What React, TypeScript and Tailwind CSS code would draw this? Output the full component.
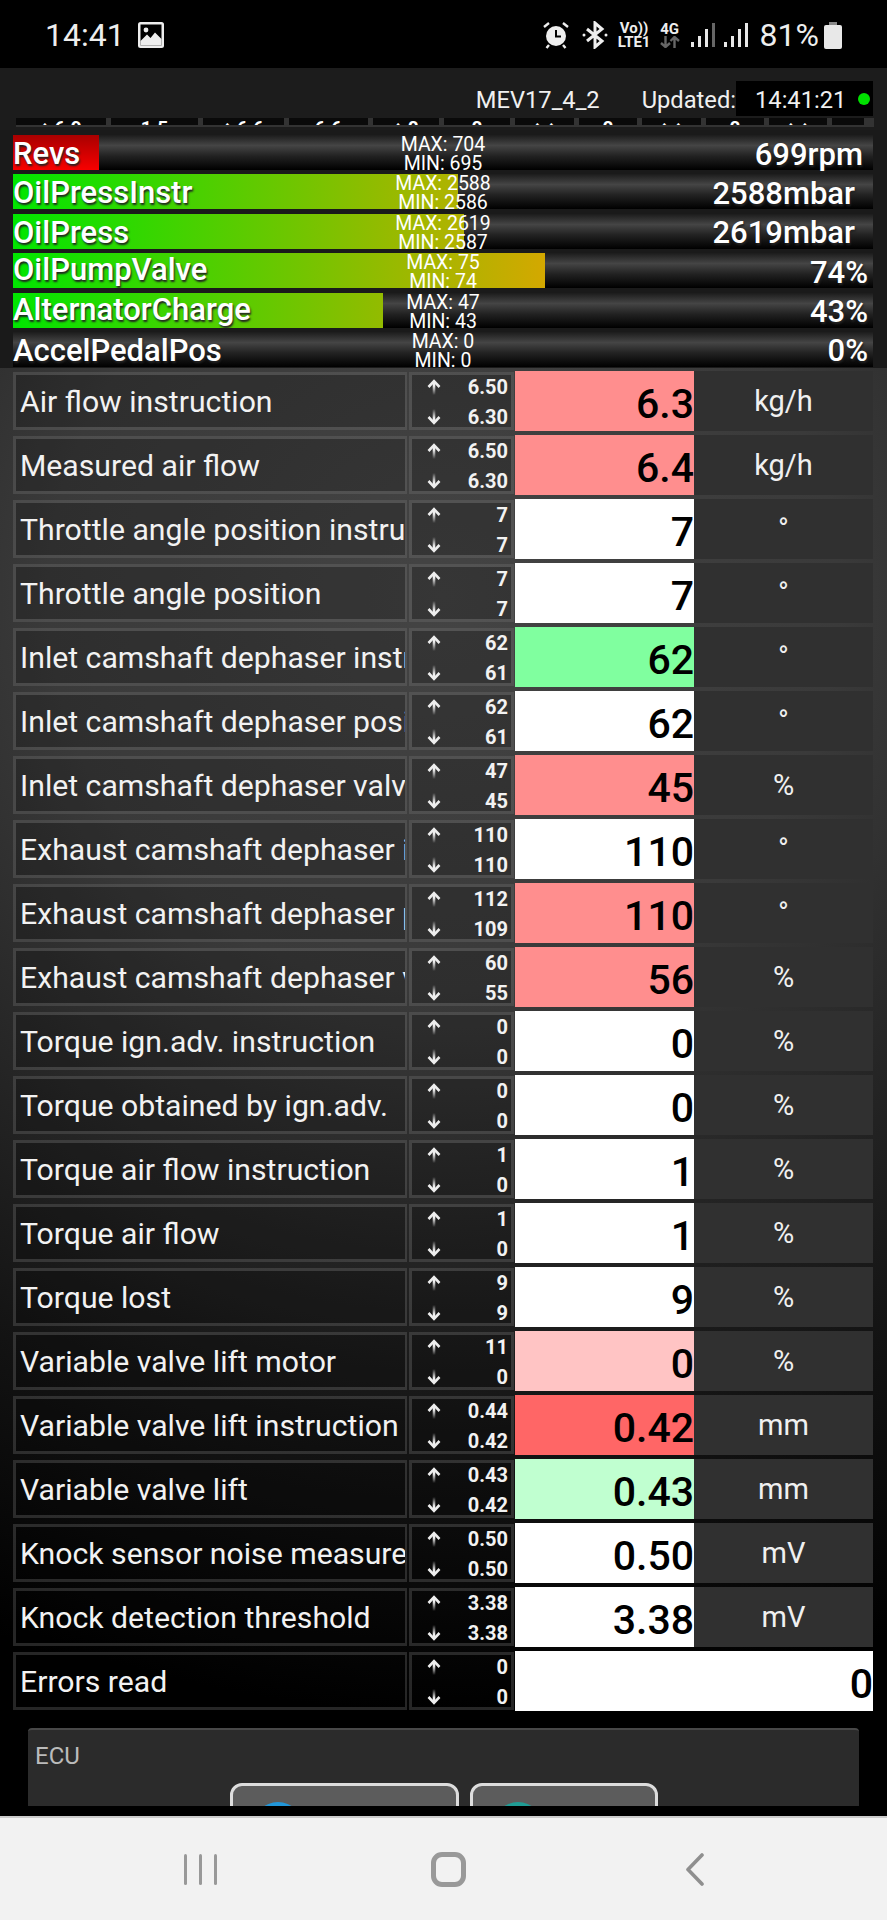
import React from "react";

type Row = { name: string; max: string; min: string; value: string; unit?: string; bg: string };

const rows: Row[] = [
  { name: "Air flow instruction", max: "6.50", min: "6.30", value: "6.3", unit: "kg/h", bg: "bg-[#ff8e8e]" },
  { name: "Measured air flow", max: "6.50", min: "6.30", value: "6.4", unit: "kg/h", bg: "bg-[#ff8e8e]" },
  { name: "Throttle angle position instruction", max: "7", min: "7", value: "7", unit: "°", bg: "bg-white" },
  { name: "Throttle angle position", max: "7", min: "7", value: "7", unit: "°", bg: "bg-white" },
  { name: "Inlet camshaft dephaser instruction", max: "62", min: "61", value: "62", unit: "°", bg: "bg-[#80ff9f]" },
  { name: "Inlet camshaft dephaser position", max: "62", min: "61", value: "62", unit: "°", bg: "bg-white" },
  { name: "Inlet camshaft dephaser valve", max: "47", min: "45", value: "45", unit: "%", bg: "bg-[#ff8e8e]" },
  { name: "Exhaust camshaft dephaser instruction", max: "110", min: "110", value: "110", unit: "°", bg: "bg-white" },
  { name: "Exhaust camshaft dephaser position", max: "112", min: "109", value: "110", unit: "°", bg: "bg-[#ff8e8e]" },
  { name: "Exhaust camshaft dephaser valve", max: "60", min: "55", value: "56", unit: "%", bg: "bg-[#ff8e8e]" },
  { name: "Torque ign.adv. instruction", max: "0", min: "0", value: "0", unit: "%", bg: "bg-white" },
  { name: "Torque obtained by ign.adv.", max: "0", min: "0", value: "0", unit: "%", bg: "bg-white" },
  { name: "Torque air flow instruction", max: "1", min: "0", value: "1", unit: "%", bg: "bg-white" },
  { name: "Torque air flow", max: "1", min: "0", value: "1", unit: "%", bg: "bg-white" },
  { name: "Torque lost", max: "9", min: "9", value: "9", unit: "%", bg: "bg-white" },
  { name: "Variable valve lift motor", max: "11", min: "0", value: "0", unit: "%", bg: "bg-[#ffc4c4]" },
  { name: "Variable valve lift instruction", max: "0.44", min: "0.42", value: "0.42", unit: "mm", bg: "bg-[#ff6666]" },
  { name: "Variable valve lift", max: "0.43", min: "0.42", value: "0.43", unit: "mm", bg: "bg-[#c0ffd0]" },
  { name: "Knock sensor noise measurement", max: "0.50", min: "0.50", value: "0.50", unit: "mV", bg: "bg-white" },
  { name: "Knock detection threshold", max: "3.38", min: "3.38", value: "3.38", unit: "mV", bg: "bg-white" },
  { name: "Errors read", max: "0", min: "0", value: "0", bg: "bg-white" },
];

type Bar = { label: string; max: string; min: string; value: string; fill: number; kind: "red" | "green" | "none"; pr: string; lift: string };

const bars: Bar[] = [
  { label: "Revs", max: "704", min: "695", value: "699rpm", fill: 86, kind: "red", pr: "pr-[10px]", lift: "pb-[1px]" },
  { label: "OilPressInstr", max: "2588", min: "2586", value: "2588mbar", fill: 445, kind: "green", pr: "pr-[18px]", lift: "pb-[2px]" },
  { label: "OilPress", max: "2619", min: "2587", value: "2619mbar", fill: 451, kind: "green", pr: "pr-[18px]", lift: "pb-[1px]" },
  { label: "OilPumpValve", max: "75", min: "74", value: "74%", fill: 532, kind: "green", pr: "pr-[5px]", lift: "pb-[5px]" },
  { label: "AlternatorCharge", max: "47", min: "43", value: "43%", fill: 370, kind: "green", pr: "pr-[5px]", lift: "pb-[4px]" },
  { label: "AccelPedalPos", max: "0", min: "0", value: "0%", fill: 0, kind: "none", pr: "pr-[5px]", lift: "pb-[1px]" },
];

const strip = [
  ["↑ 6.9", "w-[90px]"],
  ["1.5", "w-[87px]"],
  ["↑ 6.6", "w-[81px]"],
  ["6.6", "w-[79px]"],
  ["↑ 0", "w-[66px]"],
  ["0", "w-[66px]"],
  ["↑ ↑", "w-[59px]"],
  ["0", "w-[58px]"],
  ["↑ ↑", "w-[59px]"],
  ["0", "w-[58px]"],
  ["↑ ↑", "w-[58px]"],
  ["", "w-[32px]"],
];

function Arrow({ down }: { down?: boolean }) {
  return (
    <svg width="16" height="18" viewBox="0 0 16 18" className={down ? "rotate-180" : ""} fill="none" strokeWidth="2.6">
      <defs>
        <linearGradient id="arrowTail" gradientUnits="userSpaceOnUse" x1="8" y1="8" x2="8" y2="17">
          <stop offset="0" stopColor="#eeeeee" />
          <stop offset="1" stopColor="#eeeeee" stopOpacity="0" />
        </linearGradient>
      </defs>
      <path d="M8 4V17" stroke="url(#arrowTail)" />
      <path d="M2.5 9L8 3.2L13.5 9" stroke="#eeeeee" />
    </svg>
  );
}

function Signal({ dim }: { dim?: boolean }) {
  return (
    <svg width="24" height="24" viewBox="0 0 24 24" fill="#e8e8e8">
      <rect x="0" y="19" width="3" height="5" />
      <rect x="7" y="13" width="3" height="11" />
      <rect x="14" y="6" width="3" height="18" />
      <rect x="21" y="0" width="3" height="24" fill={dim ? "#666666" : "#e8e8e8"} />
    </svg>
  );
}

function StatusBar() {
  return (
    <div className="h-[68px] shrink-0 bg-black flex items-center pl-[45px] pr-[45px] pt-[2px] text-[#eeeeee]">
      <span className="text-[32px] leading-none w-[93px]">14:41</span>
      <svg width="26" height="26" viewBox="0 0 26 26">
        <rect width="26" height="26" rx="2.5" fill="#eeeeee" />
        <rect x="2.5" y="2.5" width="21" height="21" fill="#000" />
        <circle cx="8" cy="8" r="2.4" fill="#eeeeee" />
        <path d="M2.5 23.5V19L9 12.5L12.5 16L17 10.5L23.5 17V23.5Z" fill="#eeeeee" />
      </svg>
      <div className="flex-1" />
      <svg width="28" height="28" viewBox="0 0 28 28" fill="none" stroke="#eeeeee">
        <circle cx="14" cy="15" r="10" fill="#eeeeee" stroke="none" />
        <path d="M14 9V15.5H19" stroke="#000" strokeWidth="2" />
        <path d="M2 6L7 2M26 6L21 2M7 24L4.5 27M21 24L23.5 27" strokeWidth="2.4" />
      </svg>
      <svg className="ml-[12px]" width="26" height="28" viewBox="0 0 26 28" fill="none" stroke="#eeeeee" strokeWidth="3">
        <path d="M5 8L20 20L13 26V2L20 8L5 20" />
        <circle cx="2" cy="14" r="1.5" fill="#eeeeee" stroke="none" />
        <circle cx="24" cy="14" r="1.5" fill="#eeeeee" stroke="none" />
      </svg>
      <div className="ml-[10px] w-[33px] flex flex-col items-center text-[15px] font-bold leading-[14px]">
        <span>Vo))</span>
        <span>LTE1</span>
      </div>
      <div className="ml-[9px] w-[20px] flex flex-col items-center text-[15px] font-bold leading-[13px]">
        <span>4G</span>
        <svg width="20" height="12" viewBox="0 0 20 12" fill="none" stroke="#666666" strokeWidth="2.4">
          <path d="M5.5 0V11M1 7L5.5 11L10 7" />
          <path d="M14.5 12V1M10.5 5L14.5 1L19 5" />
        </svg>
      </div>
      <div className="ml-[11px]">
        <Signal dim />
      </div>
      <div className="ml-[9px]">
        <Signal />
      </div>
      <span className="ml-[12px] text-[32px] leading-none">81%</span>
      <svg className="ml-[5px]" width="18" height="27" viewBox="0 0 18 27">
        <rect x="5" y="0" width="8" height="4" fill="#888888" />
        <rect x="0" y="3" width="18" height="24" rx="2" fill="#e8e8e8" />
      </svg>
    </div>
  );
}

function Header() {
  return (
    <div className="h-[50px] shrink-0 bg-[#1c1c1c] flex items-start justify-end pr-[14px] pt-[13px] text-[23.7px] leading-[38px] text-[#f0f0f0] relative z-10">
      <span>MEV17_4_2</span>
      <span className="ml-[42px]">Updated:</span>
      <div className="w-[137px] h-[35px] bg-black flex items-start pl-[19px] justify-between pr-[3px]">
        <span>14:41:21</span>
        <span className="w-[12px] h-[12px] mt-[12px] rounded-full bg-[#00e000]" />
      </div>
    </div>
  );
}

function Strip() {
  return (
    <div className="h-[12px] shrink-0 bg-[#1c1c1c] pl-[16px] overflow-hidden">
      <div className="flex h-[9px] w-[858px] gap-[5px] bg-[#333333]">
        {strip.map(([t, w], i) => (
          <div key={i} className={`${w} h-[7px] bg-[#0a0a0a] overflow-hidden flex items-end justify-center`}>
            <span className="text-[19px] font-bold leading-[19px] text-white translate-y-[12px] whitespace-nowrap">{t}</span>
          </div>
        ))}
      </div>
    </div>
  );
}

function BarRow({ b }: { b: Bar }) {
  return (
    <div className="relative h-[35px] bg-[linear-gradient(180deg,#1c1c1c_0%,#454545_30%,#222222_60%,#000000_100%)]">
      {b.kind === "red" && (
        <div className="absolute left-0 top-0 h-full bg-[linear-gradient(180deg,#a80000,#f80000)]" style={{ width: b.fill }} />
      )}
      {b.kind === "green" && (
        <div
          className="absolute left-0 top-0 h-full bg-[linear-gradient(90deg,#00e600,#d4a800_62%,#ff0000)] bg-size-[860px_100%] bg-no-repeat"
          style={{ width: b.fill }}
        />
      )}
      <div className="relative h-full grid grid-cols-[1fr_auto_1fr] items-center text-white [text-shadow:1px_2px_2px_#222222]">
        <span className={`text-[31px] font-medium leading-[31px] whitespace-nowrap ${b.lift}`}>{b.label}</span>
        <div className="flex flex-col items-center text-[19.5px] leading-[19px] [text-shadow:none]">
          <span>MAX: {b.max}</span>
          <span>MIN: {b.min}</span>
        </div>
        <span className={`text-[31px] font-medium leading-[31px] text-right ${b.pr}`}>{b.value}</span>
      </div>
    </div>
  );
}

function TableRow({ r }: { r: Row }) {
  return (
    <div className="flex h-[60px]">
      <div className="w-[394px] h-[58px] my-[1px] border-[3px] border-r-[2px] border-white/15 bg-black/20 flex items-center pl-[4px] pt-[2px] overflow-hidden">
        <span className="text-[30.2px] leading-none whitespace-nowrap text-[#f2f2f2]">{r.name}</span>
      </div>
      <div className="ml-[2px] w-[105px] h-[58px] my-[1px] border-[3px] border-white/15 bg-black/20 flex flex-col justify-center pt-[2px]">
        <div className="flex items-center justify-between pl-[14px] pr-[3px] h-[30px] shrink-0">
          <Arrow />
          <span className="text-[20px] font-bold leading-none text-[#f2f2f2]">{r.max}</span>
        </div>
        <div className="flex items-center justify-between pl-[14px] pr-[3px] h-[30px] shrink-0">
          <Arrow down />
          <span className="text-[20px] font-bold leading-none text-[#f2f2f2]">{r.min}</span>
        </div>
      </div>
      <div className={`${r.bg} ml-[1px] ${r.unit ? "w-[179px]" : "w-[358px]"} h-[60px] flex items-center justify-end pt-[6px]`}>
        <span className="text-[41px] font-medium leading-none text-black">{r.value}</span>
      </div>
      {r.unit && (
        <div className="w-[179px] bg-[#303030] flex items-center justify-center">
          <span className="text-[29px] leading-none text-[#f0f0f0]">{r.unit}</span>
        </div>
      )}
    </div>
  );
}

function EcuPanel() {
  return (
    <div className="flex-1 min-h-0 mb-[10px] px-[28px] pt-[19px] overflow-hidden">
      <div className="relative h-[120px] rounded-t-[4px] border-t-2 border-[#484848] bg-[#2b2b2b] pt-[12px] pl-[7px]">
        <div className="text-[24px] leading-[28px] text-[#bbbbbb]">ECU</div>
        <div className="flex gap-[11px] ml-[195px] mt-[13px]">
          <div className="w-[229px] h-[80px] rounded-[12px] border-[3px] border-[#dddddd] bg-[#5c5c5c] pl-[20px] pt-[16px]">
            <div className="w-[50px] h-[50px] rounded-full bg-[#2196d8]" />
          </div>
          <div className="w-[188px] h-[80px] rounded-[12px] border-[3px] border-[#dddddd] bg-[#5c5c5c] pl-[20px] pt-[16px]">
            <div className="w-[50px] h-[50px] rounded-full bg-[#1f9c94]" />
          </div>
        </div>
      </div>
    </div>
  );
}

function NavBar() {
  return (
    <div className="h-[104px] shrink-0 bg-[#f2f2f2] border-t-2 border-[#cccccc] relative flex items-center">
      <div className="flex gap-[12px] ml-[184px] h-[31px]">
        <span className="w-[3px] h-full bg-[#999999] rounded-full" />
        <span className="w-[3px] h-full bg-[#999999] rounded-full" />
        <span className="w-[3px] h-full bg-[#999999] rounded-full" />
      </div>
      <div className="ml-[214px] w-[35px] h-[35px] rounded-[11px] border-[5px] border-[#999999]" />
      <svg className="ml-[219px]" width="20" height="33" viewBox="0 0 20 33" fill="none" stroke="#8f8f8f" strokeWidth="3.6" strokeLinecap="round" strokeLinejoin="round">
        <path d="M17 2L3 16.5L17 31" />
      </svg>
    </div>
  );
}

export default function App() {
  return (
    <div className="w-[887px] h-[1920px] overflow-hidden flex flex-col bg-black font-['Roboto',sans-serif]">
      <StatusBar />
      <Header />
      <Strip />
      <div className="h-[238px] shrink-0 bg-[#1a1a1a] px-[13px] pr-[14px] pt-[5px] flex flex-col gap-[4.4px]">
        {bars.map((b) => (
          <BarRow key={b.label} b={b} />
        ))}
      </div>
      <div className="flex-1 min-h-0 flex flex-col">
        <div className="h-[1341px] shrink-0 pt-[3px] px-[13px] flex flex-col gap-[4px] bg-[radial-gradient(circle_1130px_at_50%_17%,#444444_0%,#3a3a3a_35%,#141414_75%,#000000_100%)]">
          {rows.map((r) => (
            <TableRow key={r.name} r={r} />
          ))}
        </div>
        <EcuPanel />
      </div>
      <NavBar />
    </div>
  );
}
